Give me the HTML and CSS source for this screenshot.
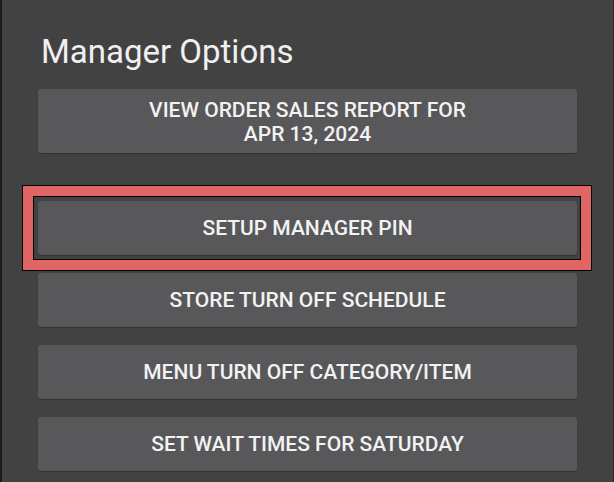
FILE: index.html
```html
<!DOCTYPE html>
<html lang="en">
<head>
<meta charset="utf-8">
<title>Manager Options</title>
<link rel="stylesheet" href="styles.css">
</head>
<body>
<div class="screen">
  <div class="edge-left"></div>
  <main class="panel">
    <h1 class="title">Manager Options</h1>
    <div class="options">
      <button class="opt opt-tall">VIEW ORDER SALES REPORT FOR<br>APR 13, 2024</button>
      <div class="highlight-wrap">
        <button class="opt">SETUP MANAGER PIN</button>
        <div class="annot"></div>
      </div>
      <button class="opt">STORE TURN OFF SCHEDULE</button>
      <button class="opt">MENU TURN OFF CATEGORY/ITEM</button>
      <button class="opt">SET WAIT TIMES FOR SATURDAY</button>
    </div>
  </main>
  <div class="edge-right"></div>
</div>
</body>
</html>
```

FILE: styles.css
```css
html, body {
  margin: 0;
  padding: 0;
  width: 614px;
  height: 482px;
  overflow: hidden;
  background: #424242;
}

.screen {
  display: flex;
  height: 482px;
}

.edge-left {
  width: 2px;
  background: #1c1c1c;
}

.edge-right {
  width: 1px;
  background: #2c2c2c;
}

.panel {
  flex: 1;
  background: #424242;
  padding: 32px 36px 0 36px;
  font-family: Roboto, "Liberation Sans", sans-serif;
}

.title {
  margin: 0 0 0 3px;
  font-size: 33px;
  line-height: 40px;
  font-weight: 400;
  color: #f0f0f0;
}

.options {
  display: flex;
  flex-direction: column;
  gap: 18px;
  margin-top: 17px;
}

.opt {
  display: block;
  width: 100%;
  height: 54px;
  margin: 0;
  border: none;
  border-radius: 3px;
  background: #58585a;
  box-shadow: 0 1px 1px rgba(0, 0, 0, 0.25);
  color: #f2f2f2;
  font-family: Roboto, "Liberation Sans", sans-serif;
  font-weight: 500;
  font-size: 21px;
  line-height: 24px;
  text-align: center;
  padding: 0;
}

.opt-tall {
  height: 64px;
  padding-top: 2px;
  margin-bottom: 30px;
}

.highlight-wrap {
  position: relative;
}

.annot {
  position: absolute;
  top: -16px;
  left: -16px;
  right: -15px;
  bottom: -16px;
  border: 1px solid #000;
}

.annot::before {
  content: "";
  position: absolute;
  inset: 0;
  border: 10px solid #e06666;
}

.annot::after {
  content: "";
  position: absolute;
  inset: 10px;
  border: 1px solid #000;
}
```
